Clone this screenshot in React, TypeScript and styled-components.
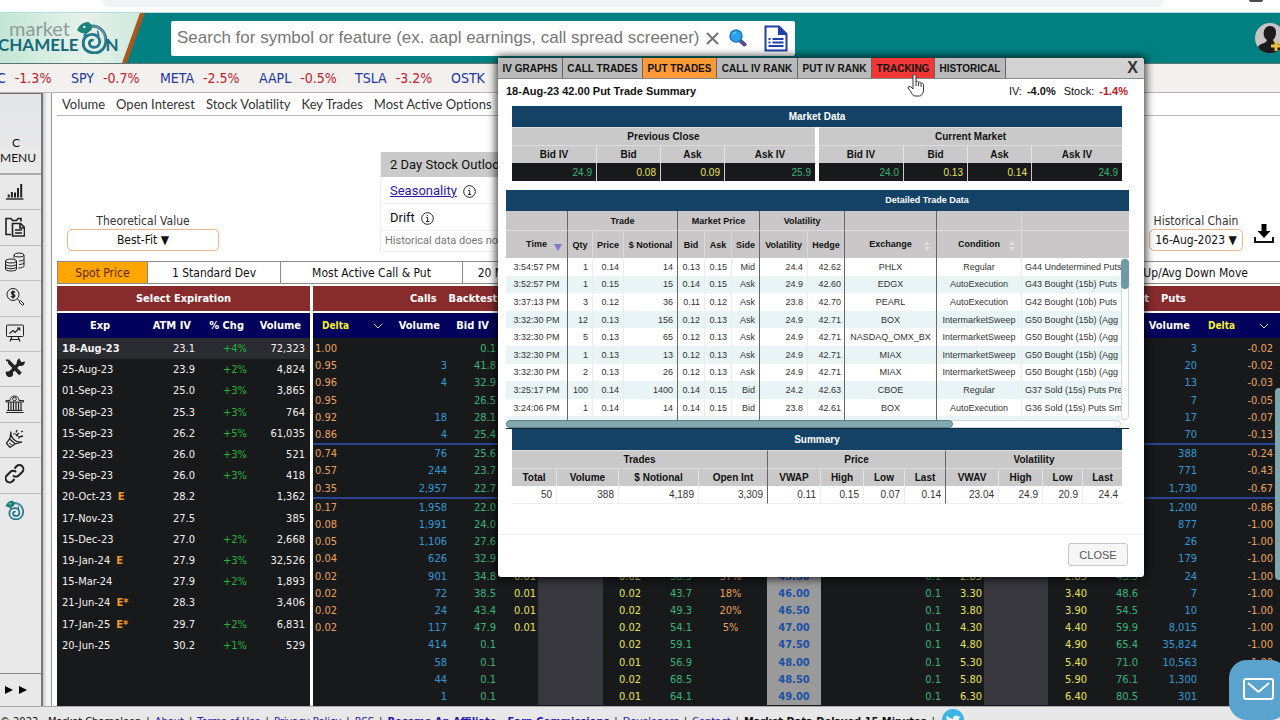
import React from "react";
import styled, { createGlobalStyle, css } from "styled-components";

const tahoma = `"DejaVu Sans Condensed", "DejaVu Sans", "Noto Sans", sans-serif`;
const arial = `"Liberation Sans", Arial, sans-serif`;

const GlobalStyle = createGlobalStyle`
  * { box-sizing: border-box; }
  body { margin: 0; background: #fff; color: #111; font-family: ${tahoma}; font-size: 11px; overflow: hidden; }
  button, input, select { font: inherit; color: inherit; margin: 0; }
  table { border-spacing: 0; table-layout: fixed; width: 100%; }
  th, td { padding: 0; overflow: hidden; white-space: nowrap; }
`;

const Page = styled.div`
  position: relative;
  display: flex;
  flex-direction: column;
  height: 100vh;
  overflow: hidden;
`;

/* ---------- top of the page ---------- */
const BrowserStrip = styled.div`
  flex: none;
  display: flex;
  justify-content: space-between;
  height: 13px;
  padding: 0 17px 0 102px;
  background: #fff;
  border-bottom: 1px solid #b9dcdc;
`;
const AddressBar = styled.div`
  width: 1062px;
  height: 7px;
  background: #f0f4f6;
  border-radius: 0 0 12px 12px;
`;
const StripDot = styled.div`
  width: 14px;
  height: 2px;
  background: #4a4a4a;
  border-radius: 0 0 7px 7px;
`;
const Header = styled.header`
  flex: none;
  display: flex;
  align-items: center;
  height: 51px;
  background: #008080;
  border-bottom: 1px solid #5c7676;
  overflow: hidden;
`;
const LogoEdge = styled.div`
  width: 145px;
  height: 50px;
  background: #a5581f;
  clip-path: polygon(0 0, 145px 0, 127px 100%, 0 100%);
  margin-right: 26px;
`;
const Logo = styled.a`
  display: block;
  width: 141px;
  height: 50px;
  padding-top: 6px;
  background: linear-gradient(90deg, #c3e6d6, #e6f2ec 60%, #cfe8dc);
  clip-path: polygon(0 0, 140px 0, 122px 100%, 0 100%);
  text-decoration: none;
  font-family: Lato, sans-serif;
`;
const LogoTop = styled.span`
  display: block;
  padding-left: 9px;
  font-size: 20px;
  line-height: 19px;
  color: #8f9c98;
`;
const LogoBottom = styled.span`
  display: flex;
  align-items: flex-start;
  margin-left: -2px;
  font-size: 17px;
  line-height: 14px;
  font-weight: 700;
  color: #17697a;
  svg { flex: none; margin: -17px -3px 0 -3px; }
`;
const SearchBox = styled.form`
  display: flex;
  align-items: center;
  width: 624px;
  height: 35px;
  padding-left: 6px;
  background: #fff;
  border-radius: 2px;
`;
const SearchInput = styled.input`
  flex: 1;
  min-width: 0;
  padding: 0;
  border: 0;
  outline: 0;
  font-family: ${arial};
  font-size: 17px;
  line-height: 24px;
  &::placeholder { color: #777; opacity: 1; }
`;
const IconButton = styled.button<{ $w: number }>`
  display: flex;
  align-items: center;
  justify-content: center;
  width: ${(p) => p.$w}px;
  padding: 0;
  border: 0;
  background: none;
`;
const Avatar = styled.a`
  display: block;
  height: 30px;
  margin-left: auto;
  margin-right: -5px;
`;
const Ticker = styled.div`
  flex: none;
  display: flex;
  align-items: center;
  height: 29px;
  padding-bottom: 1px;
  background: #f2f1f0;
  border-bottom: 1px solid #b5b5b5;
  font-size: 14px;
`;
const QuoteList = styled.div`
  display: flex;
  margin-left: -3px;
`;
const Quote = styled.a<{ $w: number }>`
  flex: none;
  display: flex;
  gap: 9px;
  width: ${(p) => p.$w}px;
  color: #2336a0;
  text-decoration: none;
  span { color: #c4202a; }
`;

/* ---------- side menu ---------- */
const Main = styled.div`
  flex: 1;
  display: flex;
  min-height: 0;
`;
const Sidebar = styled.nav`
  flex: none;
  display: flex;
  flex-direction: column;
  width: 43px;
  background: #e9e9e9;
  border-top: 1px solid #6e6e6e;
  border-right: 2px solid #777;
`;
const MenuTitle = styled.div`
  height: 81px;
  padding: 41px 9px 0 0;
  border-bottom: 2px solid #aaa;
  background: linear-gradient(#e4e5e8, #eaeaea);
  font-family: Lato, sans-serif;
  font-size: 12px;
  line-height: 15px;
  text-align: center;
`;
const MenuItems = styled.div`
  display: flex;
  flex-direction: column;
  height: 353px;
`;
const MenuItem = styled.a`
  flex: 1;
  display: flex;
  align-items: center;
  justify-content: center;
  padding-right: 12px;
  padding-bottom: 2px;
  color: #222;
  border-bottom: 1px solid #bdbdbd;
  &:last-child { border-bottom: 0; }
`;
const MenuExpand = styled.button`
  display: flex;
  align-items: center;
  gap: 6px;
  height: 33px;
  margin-top: auto;
  padding: 0 0 0 5px;
  border: 0;
  border-top: 1px solid #888;
  background: #e9e9e9;
`;
const Gutter = styled.div`
  flex: none;
  width: 9px;
  background: linear-gradient(90deg, #c9c9c9, #f4f4f4 4px);
  border-right: 1px solid #999;
`;

/* ---------- content ---------- */
const Content = styled.main`
  flex: 1;
  min-width: 0;
  padding-left: 5px;
  display: flex;
  flex-direction: column;
`;
const SubNav = styled.div`
  flex: none;
  display: flex;
  align-items: center;
  gap: 11px;
  height: 23px;
  padding-left: 5px;
  border-bottom: 1px solid #bbb;
  font-family: Lato, sans-serif;
  font-size: 13px;
  a { color: #333; text-decoration: none; }
`;
const Controls = styled.div`
  flex: none;
  display: flex;
  align-items: flex-end;
  height: 145px;
  padding: 0 6px 10px 10px;
`;
const Field = styled.label<{ $w: number }>`
  display: flex;
  flex-direction: column;
  align-items: center;
  width: ${(p) => p.$w}px;
  line-height: 15px;
  font-size: 12px;
  color: #333;
`;
const Select = styled.select`
  appearance: none;
  width: 100%;
  height: 22px;
  padding: 0;
  border: 1px solid #efb78c;
  border-radius: 5px;
  background: #fff;
  color: #111;
  font-size: 12px;
  text-align: center;
  text-align-last: center;
`;
const Outlook = styled.section`
  width: 520px;
  height: 99px;
  margin-left: 161px;
  margin-right: auto;
  font-family: Roboto, sans-serif;
  font-size: 13px;
  border-left: 1px solid #eee;
`;
const OutlookTitle = styled.h2`
  margin: 0;
  padding-left: 9px;
  background: #cacaca;
  font-size: 13px;
  font-weight: 400;
  line-height: 25px;
`;
const OutlookRow = styled.div`
  display: flex;
  align-items: center;
  gap: 6px;
  height: 27px;
  padding-left: 9px;
  border-bottom: 1px solid #f0f0f0;
  a { color: #2a1aa8; }
  svg { margin-top: 3px; }
`;
const OutlookNote = styled.p`
  margin: 0;
  padding-left: 4px;
  font-size: 11px;
  line-height: 20px;
  color: #777;
  border-bottom: 1px solid #eee;
`;
const Download = styled.button`
  width: 20px;
  height: 22px;
  margin-left: 11px;
  margin-bottom: 5px;
  padding: 0;
  border: 0;
  background: none;
`;
const PresetTabs = styled.div`
  flex: none;
  display: flex;
  height: 23px;
  margin-bottom: 2px;
  border: 1px solid #8a8a8a;
  border-right: 0;
`;
const PresetTab = styled.button<{ $w?: number; $on?: boolean }>`
  ${(p) => (p.$w ? `flex: none; width: ${p.$w}px;` : "flex: 1; text-align: right; padding-right: 32px;")}
  border: 0;
  border-right: 1px solid #8a8a8a;
  background: ${(p) => (p.$on ? "#ffa500" : "#fff")};
  color: ${(p) => (p.$on ? "#5a2500" : "#111")};
  font-size: 12px;
  line-height: 20px;
  white-space: nowrap;
  &:last-child { border-right: 0; }
`;
const Tables = styled.div`
  flex: 1;
  display: flex;
  gap: 3px;
  min-height: 0;
`;
const Panel = styled.section<{ $w?: number }>`
  ${(p) => (p.$w ? `flex: none; width: ${p.$w}px;` : "flex: 1; min-width: 0;")}
  display: flex;
  flex-direction: column;
  background: #18191b;
  overflow: hidden;
`;
const PanelBar = styled.h2`
  flex: none;
  display: flex;
  align-items: center;
  justify-content: center;
  height: 27px;
  margin: 0;
  border-bottom: 2px solid #fff;
  background: #872b2d;
  color: #fff;
  font-size: 11px;
`;
const ChainBar = styled(PanelBar)`
  justify-content: flex-start;
  gap: 12px;
  padding-left: 97px;
  span:nth-child(3) { margin-left: auto; }
  span:last-child { margin-right: 94px; }
`;
const HeadRow = styled.tr`
  height: 25px;
  background: #00005c;
  color: #fff;
  th { font-size: 11px; font-weight: 700; }
`;
const ExpTable = styled.table`
  height: 343px;
  color: #f2f2f2;
  th, td { text-align: right; }
  th:first-child { text-align: center; }
  td:first-child { text-align: left; padding-left: 5px; }
  td:nth-child(3) { color: #1db53a; }
  td:last-child { padding-right: 5px; }
  th:last-child { padding-right: 9px; }
  th:nth-child(2) { padding-right: 5px; }
  th:nth-child(3) { padding-right: 4px; }
  td:nth-child(2), td:nth-child(3) { padding-right: 1px; }
`;
const ExpRow = styled.tr<{ $on?: boolean }>`
  height: 21px;
  ${(p) => p.$on && css`background: #2a2b31; td:first-child { font-weight: 700; }`}
`;
const Earnings = styled.b`
  margin-left: 6px;
  color: #f59a23;
`;
const ChainHead = styled.table`
  flex: none;
  margin-bottom: 2px;
  th { text-align: right; padding-right: 9px; }
  th:first-child { text-align: left; padding: 0 0 0 9px; }
  th:last-child { padding-left: 9px; }
`;
const DeltaHead = styled.span`
  display: flex;
  align-items: center;
  justify-content: space-between;
  padding: 0 2px 0 0;
  color: #f5f02c;
  font-size: 10px;
`;
const ChainTable = styled.table`
  flex: none;
  height: 365px;
`;
const tones = {
  delta: "#e9a35c",
  vol: "#2f9bd6",
  iv: "#35b57c",
  price: "#e6e35a",
  pct: "#e9a35c",
  strike: "#1b50a3",
};
const ChainRow = styled.tr<{ $line?: boolean }>`
  height: ${(p) => (p.$line ? 19 : 17)}px;
  td { ${(p) => p.$line && "border-top: 2px solid #2c4393;"} }
`;
const Num = styled.td<{ $tone: keyof typeof tones; $align?: string; $pad?: number }>`
  color: ${(p) => tones[p.$tone]};
  text-align: ${(p) => p.$align || "right"};
  padding: 0 ${(p) => p.$pad ?? 2}px;
  ${(p) => p.$tone === "strike" && "background: #9a9a9a; font-weight: 700;"}
`;
const Shade = styled.td`
  background: #38373d;
`;
const PageThumb = styled.div`
  position: absolute;
  right: 0;
  top: 388px;
  width: 5px;
  height: 192px;
  border-radius: 4px 0 0 4px;
  background: #7fa5ad;
`;
const Footer = styled.footer`
  flex: none;
  display: flex;
  gap: 5px;
  height: 14px;
  padding-top: 8px;
  background: #e8e8e8;
  border-top: 1px solid #aaa;
  line-height: 14px;
  white-space: nowrap;
  overflow: hidden;
  a { color: #2418b4; text-decoration: none; }
  svg { margin: -6px 0 0 2px; flex: none; }
`;
const Chat = styled.button`
  position: absolute;
  right: -8px;
  bottom: 0;
  width: 59px;
  height: 60px;
  padding: 0;
  border: 0;
  border-radius: 18px;
  background: #5ba3cf;
`;

/* ---------- trade dialog ---------- */
const Dialog = styled.div`
  position: absolute;
  left: 498px;
  top: 58px;
  width: 646px;
  background: #fff;
  border-radius: 3px;
  box-shadow: 0 0 9px 2px rgba(0, 0, 0, 0.75);
  font-family: ${arial};
  color: #111;
`;
const TabBar = styled.div`
  display: flex;
  height: 21px;
  background: #d2d2d2;
  border-bottom: 1px solid #888;
  border-radius: 3px 3px 0 0;
`;
const Tab = styled.button<{ $w: number; $bg?: string }>`
  width: ${(p) => p.$w}px;
  padding: 0;
  border: 0;
  border-right: 1px solid #666;
  background: ${(p) => p.$bg || "#b9b9b9"};
  font-size: 10px;
  font-weight: 700;
  white-space: nowrap;
`;
const CloseX = styled.button`
  margin-left: auto;
  width: 23px;
  padding: 0;
  border: 0;
  background: none;
  color: #333;
  font-size: 16px;
  font-weight: 700;
  line-height: 20px;
`;
const TitleRow = styled.div`
  display: flex;
  justify-content: space-between;
  padding: 5px 16px 7px 8px;
  font-size: 11px;
  line-height: 15px;
  h1 { margin: 0; font-size: 11px; }
`;
const Changes = styled.div`
  display: flex;
  gap: 5px;
  b { margin-right: 3px; }
  b:last-child { margin-right: 0; color: #c4141c; }
`;
const Inset = styled.div`
  margin: 0 22px 0 14px;
`;
const BlueBar = styled.h2<{ $pad?: number }>`
  margin: 0;
  padding-left: ${(p) => p.$pad || 0}px;
  background: #144266;
  color: #fff;
  text-align: center;
  font-size: ${(p) => (p.$pad ? 9 : 10)}px;
  line-height: 21px;
`;
const Pair = styled.div`
  display: flex;
  gap: 4px;
  background: #fff;
`;
const QuoteTable = styled.table`
  flex: 1;
  font-size: 10px;
  th { height: 18px; background: #c9c9c9; border-top: 1px solid #ddd; border-left: 1px solid #e4e4e4; }
  td { height: 18px; padding-right: 4px; background: #18191b; border-left: 1px solid #ccc; text-align: right; color: #e6e35a; }
  th:first-child, td:first-child { border-left: 0; }
  td:first-child, td:last-child { color: #35b57c; }
`;
const Detail = styled.section`
  margin: 9px 15px 0 8px;
`;
const DetailScroll = styled.div`
  display: flex;
  height: 162px;
  overflow: hidden;
`;
const DetailView = styled.div`
  flex: 1;
  min-width: 0;
  overflow: hidden;
`;
const DetailHead = styled.table`
  font-size: 9px;
  th { height: 19px; background: #c9c7c7; border-left: 1px solid #d9d9d9; }
  tr:last-child th { height: 28px; border-top: 1px solid #dcdcdc; }
  th:first-child { border-left: 0; }
`;
const dark = css`border-left: 1px solid #666 !important;`;
const Th = styled.th<{ $edge?: boolean }>`
  ${(p) => p.$edge && dark}
`;
const DetailBody = styled.table`
  height: 176px;
  font-size: 9px;
  color: #333;
  td { height: 17px; text-align: right; padding-right: 4px; border-left: 1px solid #ececec; }
  td:nth-child(9) { padding-right: 3px; }
  td:nth-child(1), td:nth-child(10), td:nth-child(11) { text-align: center; padding: 0; }
  td:nth-child(12) { text-align: left; padding: 0 0 0 3px; }
  td:first-child { border-left: 0; }
  tr:nth-child(even) { background: #e8f4f6; }
`;
const Td = styled.td<{ $edge?: boolean }>`
  ${(p) => p.$edge && dark}
`;
const SortIcon = styled.svg`
  float: right;
  margin: 2px 5px 0 -13px;
`;
const VTrack = styled.div`
  width: 8px;
  border: 1px solid #c9d8dc;
  border-radius: 4px;
  background: #fff;
`;
const VThumb = styled.div`
  width: 8px;
  height: 30px;
  margin-left: -1px;
  border-radius: 4px;
  background: #6f9aa4;
`;
const HTrack = styled.div`
  height: 8px;
  margin-right: 8px;
  border: 1px solid #c9d8dc;
  border-radius: 4px;
`;
const HThumb = styled.div`
  width: 73%;
  height: 8px;
  margin: -1px;
  border: 1px solid #5f8088;
  border-radius: 4px;
  background: #82a8b0;
`;
const Rule = styled.div`
  margin: 0 15px 0 8px;
  height: 1px;
  background: #122b40;
`;
const SummaryTable = styled.table`
  font-size: 10px;
  th { height: 18px; background: #c9c9c9; border-left: 1px solid #e4e4e4; border-top: 1px solid #ddd; }
  td { height: 18px; text-align: right; padding-right: 4px; border-left: 1px solid #ececec; border-bottom: 1px solid #eee; color: #333; }
  th:first-child, td:first-child { border-left: 0; }
`;
const DialogFooter = styled.div`
  display: flex;
  justify-content: flex-end;
  margin-top: 30px;
  padding: 8px 16px 11px;
  border-top: 1px solid #eee;
`;
const CloseButton = styled.button`
  width: 60px;
  height: 23px;
  padding: 0;
  border: 1px solid #c6c6c6;
  border-radius: 3px;
  background: #f6f6f6;
  color: #555;
  font-size: 11px;
`;
const Cursor = styled.svg`
  position: absolute;
  left: 907px;
  top: 74px;
`;

/* ---------- drawings ---------- */
const Chameleon = ({ size }: { size: number }) => (
  <svg width={size} height={size} viewBox="0 0 32 32" fill="none" strokeLinecap="round">
    <path d="M14 5c8-1 15 5 15 14 0 7-5 12-11 12-7 0-11-4-11-9.500C7 16 11 13 15.500 13c4.500 0 7.500 3 7.500 6.800 0 3.500-2.600 5.700-5.500 5.700-2.800 0-4.500-1.800-4.500-4 0-1.800 1.300-3 3-3" stroke="#23788a" strokeWidth="2.800" />
    <path d="M16 5c7 0 12 6 12 13" stroke="#6d8ea6" strokeWidth="1.600" />
    <path d="M1 9C3 4 7 1 12 1l4 3.500-1 4-5 4C6 12 3 11 1 9Z" fill="#1b8277" />
    <path d="m11 10-3 4 2 1m11-5 1 4" stroke="#23788a" strokeWidth="1.600" />
    <circle cx="8" cy="5.800" r="1.200" fill="#d9efe6" />
  </svg>
);
const Info = () => (
  <svg width="13" height="13" viewBox="0 0 13 13" fill="none" stroke="#222">
    <circle cx="6.500" cy="6.500" r="5.800" />
    <path d="M5.200 5.500h1.500v4M5 9.500h3.200M6.300 3v1" />
  </svg>
);
const Chevron = () => (
  <svg width="10" height="6" viewBox="0 0 10 6" fill="none" stroke="#dfe08a"><path d="m1 1 4 4 4-4" /></svg>
);
const SortMark = ({ down }: { down?: boolean }) => (
  <SortIcon width="8" height="10" viewBox="0 0 8 10">
    {down ? <path d="M0 3h8L4 10Z" fill="#7c78cf" /> : <path d="M4 0l3 4H1ZM4 10l3-4H1Z" fill="#dedede" />}
  </SortIcon>
);
const icons: [string, React.ReactNode][] = [
  ["Charts", <><path d="M1 18h17.500" strokeWidth="1.400" /><path d="M3.700 16.500v-3M6.900 16.500V11M10 16.500v-5M13 16.500V7M16.200 16.500V3" strokeWidth="2" /></>],
  ["Reports", <><path d="M6 17.500H1V1.500h5l1.500 2h4l1.500-2h3v3" strokeWidth="1.600" /><path d="M7.500 6.500h8l4 4V19h-12Z M15 6.500v4.500h4.500" strokeWidth="1.600" fill="#e9e9e9" /><path d="M10 13h7M10 16h7" strokeWidth="1.400" /></>],
  ["Dividends", <><ellipse cx="14" cy="3" rx="5" ry="2" /><path d="M9 3v3.500M19 3v11c0 1-2 2-5.500 2M19 7c0 1-2 2-5 2M19 10.500c0 1-2 2-5 2" /><ellipse cx="6" cy="9" rx="5.500" ry="2" /><path d="M.5 9v8c0 1.200 2.300 2 5.500 2s5.500-.800 5.500-2V9M.5 12c0 1 2.300 2 5.500 2s5.500-1 5.500-2M.5 14.700c0 1 2.300 2 5.500 2s5.500-1 5.500-2" /></>],
  ["Screener", <><circle cx="8" cy="7.500" r="6" /><path d="m12.500 12 2 2M14 15l1.500-1.500 3.500 3.500-1.500 1.500L14 15Z" /><path d="M10 5.500C9 4.500 6.500 4.500 6.500 6c0 2 3.300 1 3.300 3 0 1.500-2.800 1.500-3.800.300M8 3.500v8" strokeWidth="1.400" /></>],
  ["Paper trading", <><rect x="1.500" y="2" width="17" height="11.500" rx="1" /><path d="M4.500 10.500l3.500-3 2 2L14.500 5M12 5h2.700v2.500M7 13.500l-2 5M13 13.500l2 5M6 16.500h8" strokeWidth="1.200" /></>],
  ["Tools", <><path d="M4 4l11.500 12" strokeWidth="3.600" /><path d="M14.500 5 4.500 15.500" strokeWidth="3.400" /><path d="M14 1.500c-2.500 2-1.500 5 .500 5.500s4-.500 4.500-2.500l-2.500.500-1.500-1.500ZM1.500 14.500c0 2.500 2 4.500 4.500 3.500s1-4-1-4ZM1 2l3 .500L5 6" fill="currentColor" strokeWidth="1.600" /></>],
  ["Institutions", <><path d="M1 8V6.500h4c0-6 9-6 9 0h4.500V8H1ZM1 18.500h17.500M2 16.500h15.500" /><circle cx="9.500" cy="5" r="1.800" /><path d="M3.500 8v8M6 8v8M8.500 8v8M11 8v8M13.500 8v8M16 8v8" strokeWidth="1.200" /></>],
  ["Alerts", <><path d="M6 2.500c-1 6 5 12 11 10.500M6 2.500 5 9l-3.500 5.500L5 18.500l5-3.500 7-2M4.500 10l6 5M11 7l3-3M14 8l4-1M11 3.500l1-2.500M16 3l2-1" strokeWidth="1.300" /><path d="M8 5c3-1 6 2 6 5M4 14l3 2" /></>],
  ["Links", <><path d="M8 11.500a4 4 0 0 0 5.700 0l3.500-3.500A4 4 0 0 0 11.500 2.300L9.500 4.500" strokeWidth="2" /><path d="M11 8a4 4 0 0 0-5.700 0l-3.500 3.500A4 4 0 0 0 7.500 17.200L9.500 15" strokeWidth="2" /></>],
];

/* ---------- data ---------- */
const quotes: [string, string, number][] = [
  ["C", "-1.3%", 74], ["SPY", "-0.7%", 89], ["META", "-2.5%", 99], ["AAPL", "-0.5%", 96], ["TSLA", "-3.2%", 96], ["OSTK", "", 60],
];
const expirations: [string, string, string, string, string?][] = [
  ["18-Aug-23", "23.1", "+4%", "72,323"], ["25-Aug-23", "23.9", "+2%", "4,824"], ["01-Sep-23", "25.0", "+3%", "3,865"],
  ["08-Sep-23", "25.3", "+3%", "764"], ["15-Sep-23", "26.2", "+5%", "61,035"], ["22-Sep-23", "26.0", "+3%", "521"],
  ["29-Sep-23", "26.0", "+3%", "418"], ["20-Oct-23", "28.2", "", "1,362", "E"], ["17-Nov-23", "27.5", "", "385"],
  ["15-Dec-23", "27.0", "+2%", "2,668"], ["19-Jan-24", "27.9", "+3%", "32,526", "E"], ["15-Mar-24", "27.9", "+2%", "1,893"],
  ["21-Jun-24", "28.3", "", "3,406", "E*"], ["17-Jan-25", "29.7", "+2%", "6,831", "E*"], ["20-Jun-25", "30.2", "+1%", "529"],
];
/* delta, volume, bid IV, bid, ask, ask IV, chance, strike, put bid IV, put bid, put ask, put ask IV, put volume, put delta */
const chain = [
  "1.00||0.1|||||||||||3|-0.02", "0.95|3|41.8||||||||||20|-0.02", "0.96|4|32.9||||||||||13|-0.03",
  "0.95||26.5||||||||||7|-0.05", "0.92|18|28.1||||||||||17|-0.07", "0.86|4|25.4||||||||||70|-0.13",
  "0.74|76|25.6||||||||||388|-0.24", "0.57|244|23.7||||||||||771|-0.43", "0.35|2,957|22.7||||||||||1,730|-0.67",
  "0.17|1,958|22.0||||||||||1,200|-0.86", "0.08|1,991|24.0||||||||||877|-1.00", "0.05|1,106|27.6||||||||||26|-1.00",
  "0.04|626|32.9||||||||||179|-1.00",
  "0.02|901|34.8|0.01|0.02|38.5|37%|45.50|0.1|2.85|2.85|43.5|24|-1.00",
  "0.02|72|38.5|0.01|0.02|43.7|18%|46.00|0.1|3.30|3.40|48.6|7|-1.00",
  "0.02|24|43.4|0.01|0.02|49.3|20%|46.50|0.1|3.80|3.90|54.5|10|-1.00",
  "0.02|117|47.9|0.01|0.02|54.1|5%|47.00|0.1|4.30|4.40|59.9|8,015|-1.00",
  "|414|0.1||0.02|59.1||47.50|0.1|4.80|4.90|65.4|35,824|-1.00",
  "|58|0.1||0.01|56.9||48.00|0.1|5.30|5.40|71.0|10,563|-1.00",
  "|44|0.1||0.02|68.5||48.50|0.1|5.80|5.90|76.1|1,300|-1.00",
  "|1|0.1||0.01|64.1||49.00|0.1|6.30|6.40|80.5|301|-1.00",
].map((line) => {
  const c = line.split("|");
  return c[7] ? c : [...c.slice(0, 3), "", "", "", "", "", "", "", "", "", ...c.slice(-2)];
});
const chainCols = [72, 64, 49, 40, 65, 40, 51, 73, 54, 122, 41, 64, 41, 51, 59];
const trades = [
  "3:54:57 PM|1|0.14|14|0.13|0.15|Mid|24.4|42.62|PHLX|Regular|G44 Undetermined Puts",
  "3:52:57 PM|1|0.15|15|0.14|0.15|Ask|24.9|42.60|EDGX|AutoExecution|G43 Bought (15b) Puts",
  "3:37:13 PM|3|0.12|36|0.11|0.12|Ask|23.8|42.70|PEARL|AutoExecution|G42 Bought (10b) Puts",
  "3:32:30 PM|12|0.13|156|0.12|0.13|Ask|24.9|42.71|BOX|IntermarketSweep|G50 Bought (15b) (Agg",
  "3:32:30 PM|5|0.13|65|0.12|0.13|Ask|24.9|42.71|NASDAQ_OMX_BX|IntermarketSweep|G50 Bought (15b) (Agg",
  "3:32:30 PM|1|0.13|13|0.12|0.13|Ask|24.9|42.71|MIAX|IntermarketSweep|G50 Bought (15b) (Agg",
  "3:32:30 PM|2|0.13|26|0.12|0.13|Ask|24.9|42.71|MIAX|IntermarketSweep|G50 Bought (15b) (Agg",
  "3:25:17 PM|100|0.14|1400|0.14|0.15|Bid|24.2|42.63|CBOE|Regular|G37 Sold (15s) Puts Pre",
  "3:24:06 PM|1|0.14|14|0.14|0.15|Bid|23.8|42.61|BOX|AutoExecution|G36 Sold (15s) Puts Sm",
  "|||||||||||",
].map((t) => t.split("|"));
const detailCols = [61, 25, 31, 54, 27, 27, 28, 48, 37, 92, 85];
const edges = [1, 4, 7, 9, 10];
const summaryHeads = ["Total", "Volume", "$ Notional", "Open Int", "VWAP", "High", "Low", "Last", "VWAV", "High", "Low", "Last"];
const summaryVals = ["50", "388", "4,189", "3,309", "0.11", "0.15", "0.07", "0.14", "23.04", "24.9", "20.9", "24.4"];
const summaryCols = [44, 62, 80, 69, 53, 43, 41, 41, 53, 44, 40];

const Cols = ({ widths }: { widths: number[] }) => (
  <colgroup>{widths.map((w, i) => <col key={i} width={w} />)}<col /></colgroup>
);

const QuoteGrid = ({ title, values }: { title: string; values: string[] }) => (
  <QuoteTable>
    <colgroup><col width="84" /><col width="64" /><col width="64" /><col /></colgroup>
    <thead>
      <tr><th colSpan={4}>{title}</th></tr>
      <tr><th>Bid IV</th><th>Bid</th><th>Ask</th><th>Ask IV</th></tr>
    </thead>
    <tbody><tr>{values.map((v) => <td key={v}>{v}</td>)}</tr></tbody>
  </QuoteTable>
);

const TradeDialog = () => (
  <Dialog role="dialog" aria-label="Put Trade Summary">
    <TabBar>
      <Tab $w={65}>IV GRAPHS</Tab>
      <Tab $w={80}>CALL TRADES</Tab>
      <Tab $w={74} $bg="#ff9a35">PUT TRADES</Tab>
      <Tab $w={81}>CALL IV RANK</Tab>
      <Tab $w={74}>PUT IV RANK</Tab>
      <Tab $w={63} $bg="#f23636">TRACKING</Tab>
      <Tab $w={71}>HISTORICAL</Tab>
      <CloseX aria-label="Close dialog">X</CloseX>
    </TabBar>
    <TitleRow>
      <h1>18-Aug-23 42.00 Put Trade Summary</h1>
      <Changes><span>IV:</span><b>-4.0%</b><span>Stock:</span><b>-1.4%</b></Changes>
    </TitleRow>
    <Inset>
      <BlueBar>Market Data</BlueBar>
      <Pair>
        <QuoteGrid title="Previous Close" values={["24.9", "0.08", "0.09", "25.9"]} />
        <QuoteGrid title="Current Market" values={["24.0", "0.13", "0.14", "24.9"]} />
      </Pair>
    </Inset>
    <Detail>
      <BlueBar $pad={219}>Detailed Trade Data</BlueBar>
      <DetailHead>
        <Cols widths={detailCols} />
        <thead>
          <tr>
            <th /><Th $edge colSpan={3}>Trade</Th><Th $edge colSpan={3}>Market Price</Th><Th $edge colSpan={2}>Volatility</Th><Th $edge /><Th $edge /><th />
          </tr>
          <tr>
            <th><SortMark down />Time</th><Th $edge>Qty</Th><th>Price</th><th>$ Notional</th><Th $edge>Bid</Th><th>Ask</th><th>Side</th>
            <Th $edge>Volatility</Th><th>Hedge</th><Th $edge><SortMark />Exchange</Th><Th $edge><SortMark />Condition</Th><th />
          </tr>
        </thead>
      </DetailHead>
      <DetailScroll>
        <DetailView>
          <DetailBody>
            <Cols widths={detailCols} />
            <tbody>
              {trades.map((t, r) => (
                <tr key={r}>{t.map((v, i) => <Td key={i} $edge={edges.includes(i)}>{v}</Td>)}</tr>
              ))}
            </tbody>
          </DetailBody>
        </DetailView>
        <VTrack><VThumb /></VTrack>
      </DetailScroll>
      <HTrack><HThumb /></HTrack>
    </Detail>
    <Rule />
    <Inset>
      <BlueBar>Summary</BlueBar>
      <SummaryTable>
        <Cols widths={summaryCols} />
        <thead>
          <tr><th colSpan={4}>Trades</th><Th $edge colSpan={4}>Price</Th><Th $edge colSpan={4}>Volatility</Th></tr>
          <tr>{summaryHeads.map((h, i) => <Th key={i} $edge={i === 4 || i === 8}>{h}</Th>)}</tr>
        </thead>
        <tbody><tr>{summaryVals.map((v, i) => <Td key={i} $edge={i === 4 || i === 8}>{v}</Td>)}</tr></tbody>
      </SummaryTable>
    </Inset>
    <DialogFooter><CloseButton>CLOSE</CloseButton></DialogFooter>
  </Dialog>
);

export default function App() {
  return (
    <Page>
      <GlobalStyle />
      <BrowserStrip><AddressBar /><StripDot /></BrowserStrip>
      <Header>
        <LogoEdge>
          <Logo href="#" aria-label="Market Chameleon">
            <LogoTop>market</LogoTop>
            <LogoBottom>CHAMELE<Chameleon size={33} />N</LogoBottom>
          </Logo>
        </LogoEdge>
        <SearchBox>
          <SearchInput aria-label="Search" placeholder="Search for symbol or feature (ex. aapl earnings, call spread screener)" />
          <IconButton type="button" $w={14} aria-label="Clear">
            <svg width="13" height="13" viewBox="0 0 13 13" stroke="#777" strokeWidth="2.200"><path d="m1 1 11 11M12 1 1 12" /></svg>
          </IconButton>
          <IconButton type="submit" $w={38} aria-label="Find">
            <svg width="18" height="18" viewBox="0 0 18 18">
              <path d="m11 11.500 4.500 4" stroke="#5b4a8c" strokeWidth="4" strokeLinecap="round" />
              <circle cx="7" cy="7" r="6" fill="#2aa3e8" stroke="#1b78c4" strokeWidth="1.500" />
              <path d="M4 6c0-1.500 1.500-2.500 3-2.500" stroke="#8ad4f8" fill="none" />
            </svg>
          </IconButton>
          <IconButton type="button" $w={38} aria-label="Articles">
            <svg width="24" height="27" viewBox="0 0 24 27" fill="none" stroke="#2040a8" strokeWidth="2">
              <path d="M1.500 1.500h13.500l7.500 7.500v16.500h-21Z" /><path d="M14 1v9h9Z" fill="#2040a8" stroke="none" />
              <path d="M4.500 14h2M8.500 14h11M4.500 17.500h2M8.500 17.500h11M4.500 21h15" strokeWidth="1.800" />
            </svg>
          </IconButton>
        </SearchBox>
        <Avatar href="#" aria-label="Account">
          <svg width="30" height="30" viewBox="0 0 30 30">
            <circle cx="15" cy="15" r="15" fill="#c9c3c5" />
            <path d="M3 24c2-4 8-3 9-7-3-2-4-6-3-9 1-4 4-5 6-5s6 1 6 6c0 4-1 6-3 8 1 4 7 3 9 7-5 8-19 8-24 0Z" fill="#1f1b1d" />
            <path d="M21 18v10M16 23h10" stroke="#e8c23a" strokeWidth="3" />
          </svg>
        </Avatar>
      </Header>
      <Ticker>
        <QuoteList>
          {quotes.map(([s, p, w]) => <Quote key={s} href="#" $w={w}>{s}<span>{p}</span></Quote>)}
        </QuoteList>
      </Ticker>
      <Main>
        <Sidebar>
          <MenuTitle>C<br />MENU</MenuTitle>
          <MenuItems>
            {icons.map(([name, art]) => (
              <MenuItem key={name} href="#" aria-label={name}>
                <svg width="20" height="20" viewBox="0 0 20 20" fill="none" stroke="currentColor">{art}</svg>
              </MenuItem>
            ))}
            <MenuItem href="#" aria-label="Chameleon"><Chameleon size={20} /></MenuItem>
          </MenuItems>
          <MenuExpand aria-label="Expand menu">
            <svg width="8" height="8" viewBox="0 0 8 8"><path d="M0 0v8l8-4Z" /></svg>
            <svg width="8" height="8" viewBox="0 0 8 8"><path d="M0 0v8l8-4Z" /></svg>
          </MenuExpand>
        </Sidebar>
        <Gutter />
        <Content>
          <SubNav>
            {["Volume", "Open Interest", "Stock Volatility", "Key Trades", "Most Active Options"].map((t) => <a key={t} href="#">{t}</a>)}
          </SubNav>
          <Controls>
            <Field $w={152}>Theoretical Value<Select><option>Best-Fit ▼</option></Select></Field>
            <Outlook>
              <OutlookTitle>2 Day Stock Outlook</OutlookTitle>
              <OutlookRow><a href="#">Seasonality</a><Info /></OutlookRow>
              <OutlookRow>Drift<Info /></OutlookRow>
              <OutlookNote>Historical data does not guarantee future results</OutlookNote>
            </Outlook>
            <Field $w={94}>Historical Chain<Select><option>16-Aug-2023 ▼</option></Select></Field>
            <Download aria-label="Download">
              <svg width="20" height="20" viewBox="0 0 20 20"><path d="M7.500 0h5v7h4L10 14 3.500 7h4Z" /><path d="M1 13v5h18v-5" fill="none" stroke="#111" strokeWidth="2" /></svg>
            </Download>
          </Controls>
          <PresetTabs>
            <PresetTab $w={90} $on>Spot Price</PresetTab>
            <PresetTab $w={133}>1 Standard Dev</PresetTab>
            <PresetTab $w={182}>Most Active Call &amp; Put</PresetTab>
            <PresetTab $w={110}>20 Most Active</PresetTab>
            <PresetTab>Avg Up/Avg Down Move</PresetTab>
          </PresetTabs>
          <Tables>
            <Panel $w={253}>
              <PanelBar>Select Expiration</PanelBar>
              <ExpTable>
                <colgroup><col width="86" /><col width="53" /><col width="52" /><col /></colgroup>
                <thead><HeadRow><th>Exp</th><th>ATM IV</th><th>% Chg</th><th>Volume</th></HeadRow></thead>
                <tbody>
                  {expirations.map(([d, iv, chg, vol, e], i) => (
                    <ExpRow key={d} $on={i === 0}><td>{d}{e && <Earnings>{e}</Earnings>}</td><td>{iv}</td><td>{chg}</td><td>{vol}</td></ExpRow>
                  ))}
                </tbody>
              </ExpTable>
            </Panel>
            <Panel>
              <ChainBar><span>Calls</span><span>Backtest</span><span>Backtest</span><span>Puts</span></ChainBar>
              <ChainHead>
                <colgroup><col width="72" /><col width="64" /><col width="49" /><col /><col width="59" /><col width="81" /></colgroup>
                <thead>
                  <HeadRow>
                    <th><DeltaHead>Delta<Chevron /></DeltaHead></th><th>Volume</th><th>Bid IV</th><th /><th>Volume</th>
                    <th><DeltaHead>Delta<Chevron /></DeltaHead></th>
                  </HeadRow>
                </thead>
              </ChainHead>
              <ChainTable>
                <Cols widths={chainCols} />
                <tbody>
                  {chain.map((c, i) => (
                    <ChainRow key={i} $line={i === 6 || i === 9}>
                      <Num $tone="delta" $align="left">{c[0]}</Num>
                      <Num $tone="vol">{c[1]}</Num>
                      <Num $tone="iv">{c[2]}</Num>
                      <Num $tone="price">{c[3]}</Num>
                      <Shade />
                      <Num $tone="price">{c[4]}</Num>
                      <Num $tone="iv">{c[5]}</Num>
                      <Num $tone="pct" $align="center">{c[6]}</Num>
                      <Num $tone="strike" $align="center">{c[7]}</Num>
                      <Num $tone="iv">{c[8]}</Num>
                      <Num $tone="price">{c[9]}</Num>
                      <Shade />
                      <Num $tone="price">{c[10]}</Num>
                      <Num $tone="iv">{c[11]}</Num>
                      <Num $tone="vol">{c[12]}</Num>
                      <Num $tone="delta" $pad={7}>{c[13]}</Num>
                    </ChainRow>
                  ))}
                </tbody>
              </ChainTable>
            </Panel>
          </Tables>
        </Content>
      </Main>
      <Footer>
        <span>© 2023 - Market Chameleon</span>|<a href="#">About</a>|<a href="#">Terms of Use</a>|<a href="#">Privacy Policy</a>|<a href="#">RSS</a>|
        <a href="#"><b>Become An Affiliate - Earn Commissions</b></a>|<a href="#">Developers</a>|<a href="#">Contact</a>|<b>Market Data Delayed 15 Minutes</b>|
        <svg width="22" height="22" viewBox="0 0 20 20"><circle cx="10" cy="10" r="10" fill="#3db4e8" /><path d="M4 6c2 2 4 3 6 3 0-3 3-4 5-2l2-.500-1.500 2C15 14 9 17 4 14c2 0 3-.500 3-1-2-1-3-3-3-7Z" fill="#fff" /></svg>
      </Footer>
      <PageThumb />
      <Chat aria-label="Contact us">
        <svg width="32" height="24" viewBox="0 0 32 24" fill="none" stroke="#fff" strokeWidth="2"><rect x="1" y="2" width="29" height="20" rx="2" /><path d="m5 6 10.500 9L26 6" /></svg>
      </Chat>
      <TradeDialog />
      <Cursor width="18" height="23" viewBox="0 0 18 23" fill="#fff" stroke="#333" strokeWidth="1">
        <path d="M6 13V2c0-2 3-2 3 0v6c0-1 2.500-1 2.500.500C12 7.500 14 8 14 9.500c1-1 2.500 0 2.500 1V16c0 3-2 6-4 6H8c-2 0-3-2-4-4l-3-4c0-2 2-2 3-1l2 2Z" />
        <path d="M9 8v4M11.500 9v3M14 10v3" />
      </Cursor>
    </Page>
  );
}
